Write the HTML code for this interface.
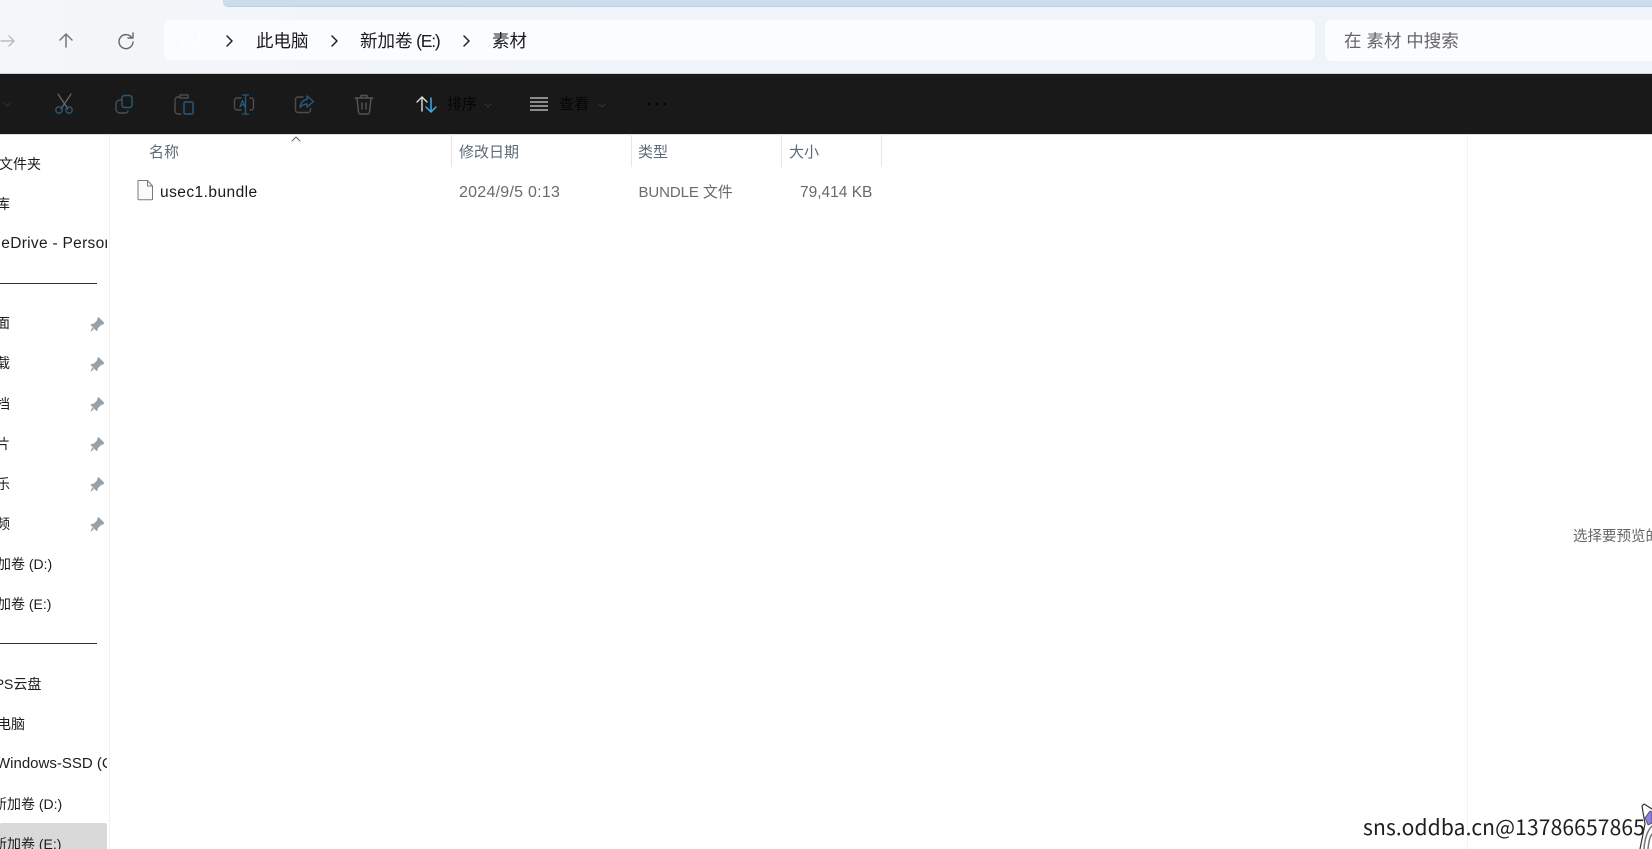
<!DOCTYPE html>
<html lang="zh"><head><meta charset="utf-8"><title>素材</title>
<style>
html,body{margin:0;padding:0;width:1652px;height:849px;overflow:hidden;background:#fff}
body{position:relative;font-family:"Liberation Sans","Noto Sans CJK SC",sans-serif;color:#1a1a1a}
.a{position:absolute;white-space:nowrap}
#side{position:absolute;left:0;top:134px;width:107px;height:715px;overflow:hidden}
#side span{position:absolute;white-space:nowrap;font-size:14px;line-height:20px;color:#1c1c1c}
.h{font-size:15px;line-height:20px;color:#5c6b7a;top:143px}
.r{font-size:15px;line-height:20px;color:#6a6a6a;top:183px}
.s{position:absolute;top:134px;width:1px;height:33px;background:#e6e6e6}
svg{position:absolute;left:0;top:0}
</style></head><body>
<div class="a" style="left:0;top:0;width:1652px;height:74px;background:linear-gradient(90deg,#f4f6f9,#eef4f9 40%);border-bottom:1px solid #c9d2d9;box-sizing:border-box"></div>
<div class="a" style="left:223px;top:-4px;width:1440px;height:11px;background:#cbdcec;border-bottom:1px solid #b9cee3;border-radius:5px;box-sizing:border-box"></div>
<div class="a" style="left:164px;top:20px;width:1151px;height:40px;background:#fbfcff;border-radius:6px"></div>
<div class="a" style="left:1325px;top:20px;width:340px;height:41px;background:#fbfcff;border-radius:6px"></div>
<div class="a" style="left:256px;top:28px;font-size:17.5px;line-height:26px;color:#1b1b1b">此电脑</div>
<div class="a" style="left:360px;top:28px;font-size:17.5px;line-height:26px;color:#1b1b1b">新加卷<span style="letter-spacing:-1.2px"> (E:)</span></div>
<div class="a" style="left:492px;top:28px;font-size:17.5px;line-height:26px;color:#1b1b1b">素材</div>
<div class="a" style="left:1344px;top:28px;font-size:17.5px;line-height:26px;color:#666">在 素材 中搜索</div>
<div class="a" style="left:0;top:74px;width:1652px;height:60px;background:#191919"></div>
<div class="a" style="left:447px;top:94px;font-size:15px;line-height:22px;color:#050505">排序</div>
<div class="a" style="left:559px;top:94px;font-size:15px;line-height:22px;color:#050505">查看</div>
<div class="a" style="left:0;top:134px;width:1652px;height:1px;background:#cfe0ee"></div>
<div class="a" style="left:109px;top:135px;width:1px;height:714px;background:#f1f1f1"></div>
<div class="a" style="left:1467px;top:135px;width:1px;height:714px;background:#f3f3f3"></div>
<div id="side">
<span style="left:-1px;top:20px">文件夹</span>
<span style="left:-4px;top:60px">库</span>
<span style="left:-20px;top:100px;font-size:15.5px;letter-spacing:.3px">OneDrive - Personal</span>
<div style="position:absolute;left:0;top:149px;width:97px;height:1px;background:#333"></div>
<span style="left:-4px;top:179px">面</span>
<span style="left:-4px;top:219px">载</span>
<span style="left:-4px;top:260px">档</span>
<span style="left:-4px;top:300px">片</span>
<span style="left:-4px;top:340px">乐</span>
<span style="left:-4px;top:380px">频</span>
<span style="left:-17px;top:420px">新加卷 (D:)</span>
<span style="left:-17px;top:460px">新加卷 (E:)</span>
<div style="position:absolute;left:0;top:509px;width:97px;height:1px;background:#333"></div>
<span style="left:-18.500px;top:540px">WPS云盘</span>
<span style="left:-17px;top:580px">此电脑</span>
<span style="left:-4px;top:620px;font-size:15px">Windows-SSD (C:)</span>
<span style="left:-7px;top:660px">新加卷 (D:)</span>
<div style="position:absolute;left:0;top:689px;width:107px;height:30px;background:#d9d9d9;border-radius:2px"></div>
<span style="left:-7px;top:700px">新加卷 (E:)</span>
</div>
<div class="a h" style="left:149px">名称</div>
<div class="a h" style="left:459px">修改日期</div>
<div class="a h" style="left:638px">类型</div>
<div class="a h" style="left:789px">大小</div>
<div class="s" style="left:451px"></div><div class="s" style="left:631px"></div><div class="s" style="left:781px"></div><div class="s" style="left:881px"></div>
<div class="a" style="left:160px;top:182px;font-size:15.500px;line-height:22px;color:#1a1a1a;letter-spacing:.45px">usec1.bundle</div>
<div class="a r" style="left:459px;font-size:16px;letter-spacing:.25px">2024/9/5 0:13</div>
<div class="a r" style="left:638.500px;letter-spacing:-.1px">BUNDLE 文件</div>
<div class="a r" style="left:800px;font-size:15.500px">79,414 KB</div>
<div class="a" style="left:1573px;top:526px;font-size:14.500px;line-height:22px;color:#666">选择要预览的文件。</div>
<div class="a" style="left:1363px;top:813px;font-size:21px;line-height:28px;color:#1e1e1e;letter-spacing:.15px;font-family:'Noto Sans CJK SC','Liberation Sans',sans-serif">sns.oddba.cn@13786657865</div>
<svg width="1652" height="849" fill="none" stroke-linecap="round" stroke-linejoin="round">
<rect x="182" y="30" width="17" height="18" rx="3" stroke="#fdfeff" stroke-width="1.500"/>
<path d="M1 41H14M9 36l5 5-5 5" stroke="#b8bcc0" stroke-width="1.400"/>
<path d="M66 47V34M60 40l6-6 6 6" stroke="#777" stroke-width="1.500"/>
<path d="M132 38a7 7 0 1 0 1 4M133 33v5h-5" stroke="#666" stroke-width="1.400"/>
<path d="M227 36l5 5-5 5M332 36l5 5-5 5M464 36l5 5-5 5" stroke="#222" stroke-width="1.500"/>
<path d="M4 103l3 3 3-3" stroke="#333" stroke-width="1"/>
<path d="M58 94l10 15M71 94L61 109" stroke="#6b6b6b" stroke-width="1.200"/>
<circle cx="59" cy="110" r="3.200" stroke="#28597a" stroke-width="1.400"/><circle cx="69" cy="110" r="3.200" stroke="#28597a" stroke-width="1.400"/>
<rect x="122" y="95.500" width="10" height="12" rx="2.500" stroke="#28597a" stroke-width="1.500"/>
<path d="M121 100h-1a4 4 0 0 0-4 4v5a4 4 0 0 0 4 4h5a3 3 0 0 0 3-2" stroke="#4d4d4d" stroke-width="1.400"/>
<path d="M180 97h-2a3 3 0 0 0-3 3v11a3 3 0 0 0 3 3h3M180 95h8v3h-8z" stroke="#4d4d4d" stroke-width="1.400"/>
<rect x="184" y="102" width="9" height="12" rx="1.500" stroke="#28597a" stroke-width="1.500"/>
<path d="M241 98h-4a2.500 2.500 0 0 0-2.500 2.500v7a2.500 2.500 0 0 0 2.500 2.500h4M250 98h1a2.500 2.500 0 0 1 2.500 2.500v7a2.500 2.500 0 0 1-2.500 2.500h-1" stroke="#4d4d4d" stroke-width="1.400"/>
<path d="M245.500 95v19M242.500 95h6M242.500 114h6M240 107l2.500-6.500 2.500 6.500M241 105h3" stroke="#28597a" stroke-width="1.300"/>
<path d="M303 97h-5a2.500 2.500 0 0 0-2.500 2.500v10.500a2.500 2.500 0 0 0 2.500 2.500h10a2.500 2.500 0 0 0 2.500-2.500v-1.500" stroke="#4d4d4d" stroke-width="1.400"/>
<path d="M307 96l6.500 5.500-6.500 5.500v-3c-3 0-5 1-7 3.500 .5-4.500 3-7.500 7-8z" stroke="#28597a" stroke-width="1.400"/>
<path d="M355 98h18M361 98v-2.500h6V98M357 98l1.500 14a2 2 0 0 0 2 2h7a2 2 0 0 0 2-2L371 98M362 103v6M366 103v6" stroke="#555" stroke-width="1.400"/>
<path d="M422 111V97M417 102l5-5 5 5" stroke="#ddd" stroke-width="1.400"/>
<path d="M431 98v14M426 107l5 5 5-5" stroke="#3fa9e8" stroke-width="1.500"/>
<path d="M485 104l3 3 3-3M599 104l3 3 3-3" stroke="#333" stroke-width="1"/>
<path d="M530 98h18M530 102h18M530 106h18M530 110h18" stroke="#d0d0d0" stroke-width="1.300" stroke-linecap="butt"/>
<circle cx="649" cy="104" r="1.400" fill="#050505"/><circle cx="657" cy="104" r="1.400" fill="#050505"/><circle cx="665" cy="104" r="1.400" fill="#050505"/>
<path d="M292 141l4-4 4 4" stroke="#666" stroke-width="1"/>
<path d="M138 180.500h9.500l5 5.500v13a.8.8 0 0 1-.8.8H138.800a.8.8 0 0 1-.8-.8z" fill="#fafafa" stroke="#7a7a7a" stroke-width="1"/>
<path d="M147.500 180.500V186h5" stroke="#7a7a7a" stroke-width="1"/>
<g fill="#98a0a8" transform="translate(1,0)">
<path id="p" d="M97.500 317L103.500 323L102 324.500L100 325L97 328L96.500 330.500L95.500 331L89.500 325L90.500 324L93 323.500L96 320.500L96.500 318zM91.500 327.500L93 329L90 331.500L89.500 331z"/>
<use href="#p" y="40"/><use href="#p" y="80"/><use href="#p" y="120"/><use href="#p" y="160"/><use href="#p" y="200"/>
</g>
<path d="M1640 849L1645 824L1642 806L1644 804L1652 809V849z" fill="#fff"/>
<path d="M1640 849L1645 824L1642 806L1644 804L1652 809" stroke="#333" stroke-width="1.200"/>
<path d="M1645 818L1650 811L1652 812V823L1648 825z" fill="#8b7fe6" stroke="#444" stroke-width=".8"/>
<path d="M1644 849Q1645 833 1652 826M1648 849Q1649 838 1652 834" stroke="#777" stroke-width="1.500"/>
</svg>
</body></html>
